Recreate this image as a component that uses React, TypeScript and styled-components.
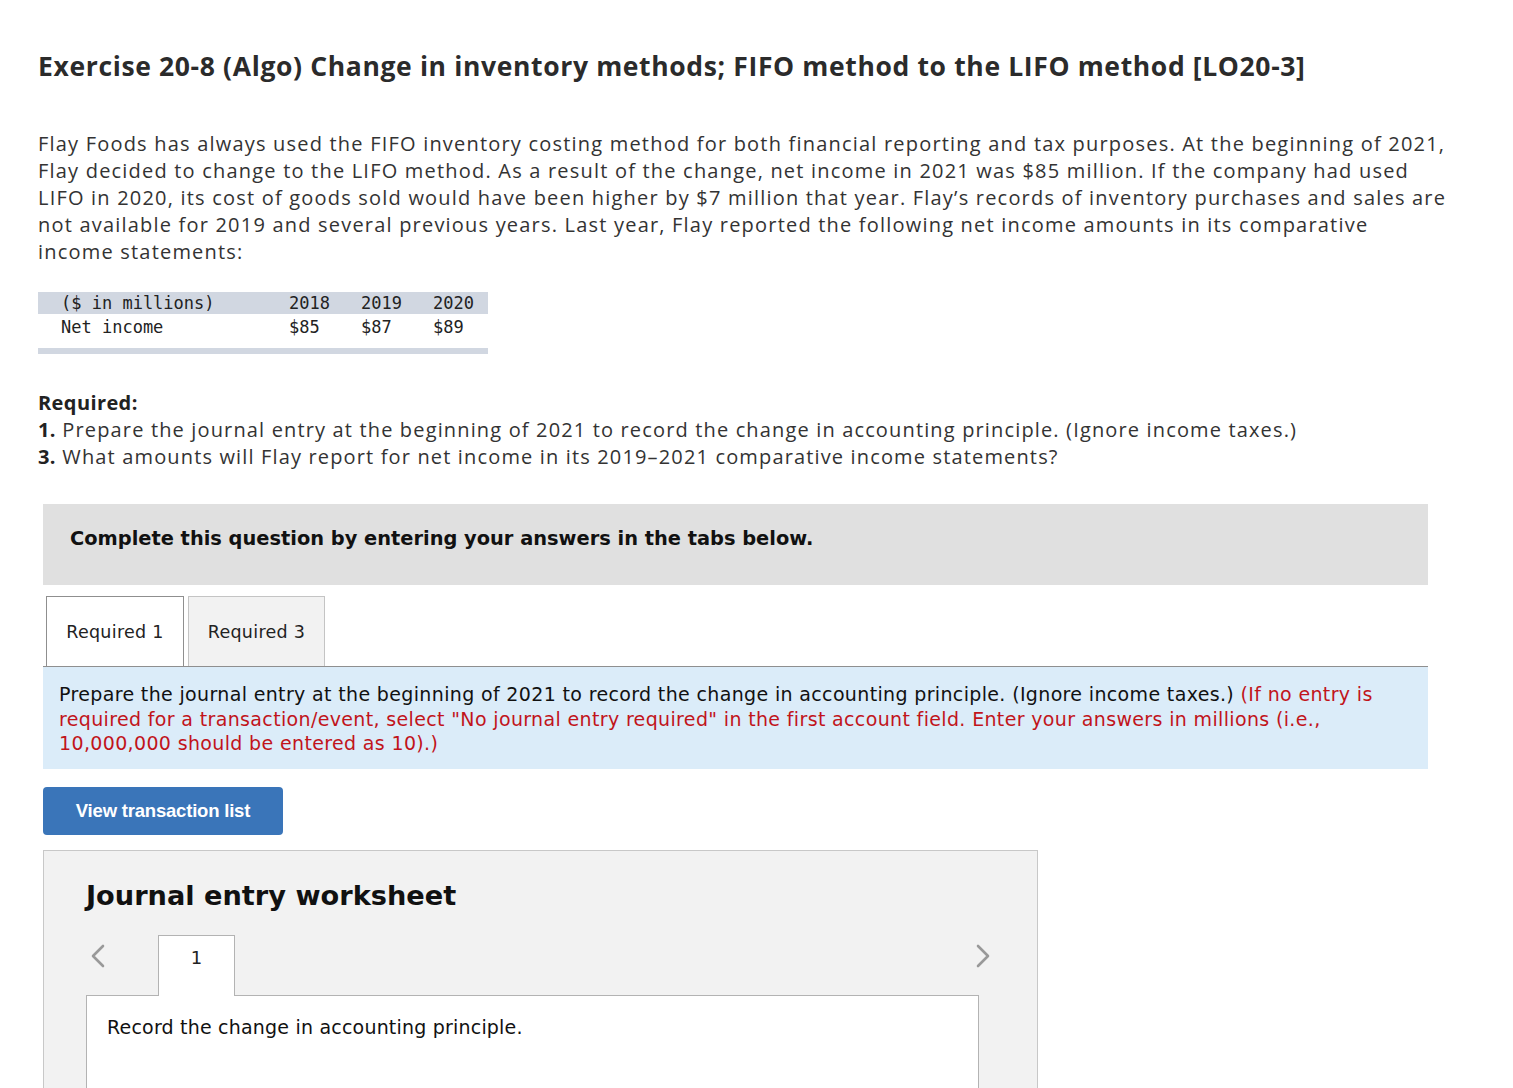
import styled, { createGlobalStyle } from "styled-components";

const GlobalStyle = createGlobalStyle`
    html, body {
        margin: 0;
        padding: 0;
        background: #fff;
        color: #222;
    }
`;

const Page = styled.div`
    padding: 44px 0 0 38px;
    width: 1412px;
    font-family: "Open Sans", "Noto Sans", sans-serif;
`;

const Title = styled.h1`
    margin: 0;
    font-size: 26.5px;
    font-weight: 700;
    letter-spacing: 0.64px;
    color: #2b2b2b;
    line-height: 44px;
`;

const Intro = styled.p`
    margin: 42px 0 0 0;
    font-size: 20px;
    letter-spacing: 1.2px;
    line-height: 27px;
    color: #333;
`;

const DataTable = styled.table`
    margin-top: 27px;
    width: 450px;
    border-collapse: collapse;
    font-family: "DejaVu Sans Mono", "Liberation Mono", monospace;
    font-size: 17px;
    color: #222;
    border-bottom: 6px solid #d1d7e1;

    td {
        padding: 0 8px;
        height: 22px;
    }
    td:first-child {
        padding-left: 23px;
    }
    td.num {
        text-align: right;
        width: 56px;
    }
    td.num:last-child {
        padding-right: 14px;
    }
    tr:last-child td {
        padding-bottom: 10px;
        padding-top: 2px;
    }
`;

const HeadRow = styled.tr`
    background: #d1d7e1;
`;

const Required = styled.div`
    margin-top: 35px;
    font-size: 20px;
    letter-spacing: 1.15px;
    line-height: 27px;
    color: #333;

    b {
        font-weight: 700;
        color: #222;
        letter-spacing: 0.4px;
    }
`;

const Instructions = styled.div`
    margin: 34px 0 0 5px;
    width: 1385px;
    height: 81px;
    background: #e0e0e0;
    display: flex;
    align-items: center;
    padding-left: 27px;
    box-sizing: border-box;
    font-family: "DejaVu Sans", Verdana, sans-serif;
    font-weight: 700;
    font-size: 19.4px;
    color: #111;
    padding-bottom: 12px;
`;

const TabBar = styled.div`
    margin: 11px 0 0 5px;
    width: 1385px;
    display: flex;
    gap: 4px;
    padding-left: 3px;
    box-sizing: border-box;
    border-bottom: 1px solid #8f8f8f;
`;

const Tab = styled.div<{ $active?: boolean }>`
    width: ${(p) => (p.$active ? 138 : 137)}px;
    height: 70px;
    box-sizing: border-box;
    display: flex;
    align-items: center;
    justify-content: center;
    border: 1px solid ${(p) => (p.$active ? "#8f8f8f" : "#c4c4c4")};
    border-bottom: none;
    background: ${(p) => (p.$active ? "#fff" : "#f2f2f2")};
    margin-bottom: ${(p) => (p.$active ? "-1px" : "0")};
    font-family: "DejaVu Sans", Verdana, sans-serif;
    font-size: 17.5px;
    letter-spacing: 0.3px;
    color: #222;
`;

const Prompt = styled.div`
    margin-left: 5px;
    width: 1385px;
    box-sizing: border-box;
    background: #dbecf9;
    padding: 15px 16px 13px 16px;
    font-family: "DejaVu Sans", Verdana, sans-serif;
    font-size: 19px;
    letter-spacing: 0.35px;
    line-height: 24.5px;
    color: #111;
`;

const Red = styled.span`
    color: #c1141b;
`;

const ViewButton = styled.button`
    display: block;
    margin: 18px 0 0 5px;
    width: 240px;
    height: 48px;
    border: none;
    border-radius: 4px;
    background: #3a75b9;
    color: #fff;
    font-family: "Liberation Sans", Arial, sans-serif;
    font-weight: 700;
    font-size: 18.5px;
    letter-spacing: -0.2px;
`;

const Worksheet = styled.div`
    margin: 15px 0 0 5px;
    width: 995px;
    height: 240px;
    box-sizing: border-box;
    background: #f2f2f2;
    border: 1px solid #c8c8c8;
    border-bottom: none;
    padding: 26px 42px 0 42px;
`;

const WorksheetTitle = styled.h2`
    margin: 0;
    font-family: "DejaVu Sans", Verdana, sans-serif;
    font-size: 27.2px;
    font-weight: 700;
    color: #111;
    line-height: 38px;
`;

const EntryNav = styled.div`
    margin-top: 20px;
    display: flex;
    align-items: flex-start;
`;

const Arrow = styled.div`
    width: 24px;
    height: 42px;
    display: flex;
    align-items: center;
    justify-content: center;
`;

const EntryTab = styled.div`
    margin-left: 48px;
    width: 77px;
    height: 61px;
    box-sizing: border-box;
    border: 1px solid #b3b3b3;
    border-bottom: none;
    background: #fff;
    margin-bottom: -1px;
    display: flex;
    justify-content: center;
    padding-top: 11px;
    font-family: "DejaVu Sans", Verdana, sans-serif;
    font-size: 18px;
    color: #222;
    position: relative;
    z-index: 1;
`;

const NavSpacer = styled.div`
    flex: 1;
`;

const EntryBody = styled.div`
    width: 893px;
    height: 120px;
    box-sizing: border-box;
    background: #fff;
    border: 1px solid #b3b3b3;
    border-bottom: none;
    padding: 20px 20px;
    font-family: "DejaVu Sans", Verdana, sans-serif;
    font-size: 19px;
    letter-spacing: 0.2px;
    color: #111;
`;

const Chevron = ({ dir }: { dir: "left" | "right" }) => (
    <svg width="14" height="24" viewBox="0 0 14 24" fill="none">
        <path
            d={dir === "left" ? "M12 2 L2 12 L12 22" : "M2 2 L12 12 L2 22"}
            stroke="#999"
            strokeWidth="2.6"
            strokeLinecap="round"
            strokeLinejoin="round"
        />
    </svg>
);

const App = () => {
    return (
        <>
            <GlobalStyle />
            <Page>
                <Title>Exercise 20-8 (Algo) Change in inventory methods; FIFO method to the LIFO method [LO20-3]</Title>

                <Intro>
                    Flay Foods has always used the FIFO inventory costing method for both financial reporting and tax purposes. At the beginning of 2021, Flay decided to change to the LIFO method. As a result of the change, net income in 2021 was $85 million. If the company had used LIFO in 2020, its cost of goods sold would have been higher by $7 million that year. Flay’s records of inventory purchases and sales are not available for 2019 and several previous years. Last year, Flay reported the following net income amounts in its comparative income statements:
                </Intro>

                <DataTable>
                    <tbody>
                        <HeadRow>
                            <td>($ in millions)</td>
                            <td className="num">2018</td>
                            <td className="num">2019</td>
                            <td className="num">2020</td>
                        </HeadRow>
                        <tr>
                            <td>Net income</td>
                            <td className="num">$85&nbsp;</td>
                            <td className="num">$87&nbsp;</td>
                            <td className="num">$89&nbsp;</td>
                        </tr>
                    </tbody>
                </DataTable>

                <Required>
                    <b>Required:</b>
                    <br />
                    <b>1.</b> Prepare the journal entry at the beginning of 2021 to record the change in accounting principle. (Ignore income taxes.)
                    <br />
                    <b>3.</b> What amounts will Flay report for net income in its 2019–2021 comparative income statements?
                </Required>

                <Instructions>Complete this question by entering your answers in the tabs below.</Instructions>

                <TabBar>
                    <Tab $active>Required 1</Tab>
                    <Tab>Required 3</Tab>
                </TabBar>

                <Prompt>
                    Prepare the journal entry at the beginning of 2021 to record the change in accounting principle. (Ignore income taxes.){" "}
                    <Red>
                        (If no entry is required for a transaction/event, select "No journal entry required" in the first account field. Enter your answers in millions (i.e., 10,000,000 should be entered as 10).)
                    </Red>
                </Prompt>

                <ViewButton>View transaction list</ViewButton>

                <Worksheet>
                    <WorksheetTitle>Journal entry worksheet</WorksheetTitle>
                    <EntryNav>
                        <Arrow>
                            <Chevron dir="left" />
                        </Arrow>
                        <EntryTab>1</EntryTab>
                        <NavSpacer />
                        <Arrow>
                            <Chevron dir="right" />
                        </Arrow>
                    </EntryNav>
                    <EntryBody>Record the change in accounting principle.</EntryBody>
                </Worksheet>
            </Page>
        </>
    );
};

export default App;
